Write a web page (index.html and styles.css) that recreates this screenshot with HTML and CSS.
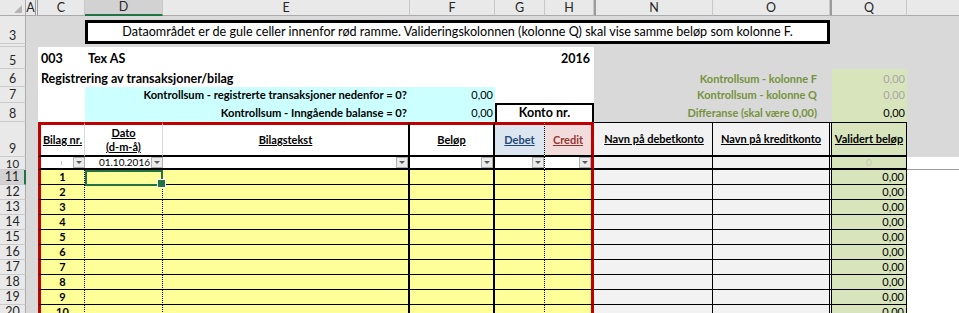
FILE: index.html
```html
<!DOCTYPE html>
<html lang="no">
<head>
<meta charset="utf-8">
<title>Registrering av transaksjoner/bilag</title>
<link rel="stylesheet" href="styles.css">
</head>
<body>
<div class="sheet">
  <div class="row hdr">
    <div class="corner"></div>
    <div class="A">A</div>
    <div>C</div>
    <div class="sel">D</div>
    <div>E</div>
    <div>F</div>
    <div>G</div>
    <div>H</div>
    <div class="gap"></div>
    <div>N</div>
    <div>O</div>
    <div class="gap"></div>
    <div>Q</div>
    <div class="last"></div>
  </div>

  <div class="row r3">
    <div class="rh">3</div>
    <div class="s2"></div>
    <div class="box">Dataområdet er de gule celler innenfor rød ramme. Valideringskolonnen (kolonne Q) skal vise samme beløp som kolonne F.</div>
    <div class="s3"></div>
  </div>

  <div class="row r4">
    <div class="rh"></div>
    <div class="s13"></div>
  </div>

  <div class="row r5">
    <div class="rh">5</div>
    <div></div>
    <div class="wt b l">003</div>
    <div class="wt b l s4">Tex AS</div>
    <div class="wt b r">2016</div>
    <div class="s6"></div>
  </div>

  <div class="row r6">
    <div class="rh">6</div>
    <div></div>
    <div class="wt title s6">Registrering av transaksjoner/bilag</div>
    <div></div>
    <div class="olive s2">Kontrollsum - kolonne F</div>
    <div></div>
    <div class="qv dim">0,00</div>
    <div></div>
  </div>

  <div class="row r7">
    <div class="rh">7</div>
    <div></div>
    <div class="wt"></div>
    <div class="cy lab s2">Kontrollsum - registrerte transaksjoner nedenfor = 0?</div>
    <div class="cy num">0,00</div>
    <div class="wt s2"></div>
    <div></div>
    <div class="olive s2">Kontrollsum - kolonne Q</div>
    <div></div>
    <div class="qv dim">0,00</div>
    <div></div>
  </div>

  <div class="row r8">
    <div class="rh">8</div>
    <div></div>
    <div class="wt"></div>
    <div class="cy lab s2">Kontrollsum - Inngående balanse = 0?</div>
    <div class="cy num">0,00</div>
    <div class="konto s2">Konto nr.</div>
    <div></div>
    <div class="olive s2">Differanse (skal være 0,00)</div>
    <div></div>
    <div class="qv">0,00</div>
    <div></div>
  </div>

  <div class="row r9">
    <div class="rh">9</div>
    <div></div>
    <div class="C"><span>Bilag nr.</span></div>
    <div class="D"><span>Dato<br>(d-m-å)</span></div>
    <div class="E"><span>Bilagstekst</span></div>
    <div class="F"><span>Beløp</span></div>
    <div class="G"><span>Debet</span></div>
    <div class="H"><span>Credit</span></div>
    <div class="g1"></div>
    <div class="N"><span>Navn på debetkonto</span></div>
    <div class="O"><span>Navn på kreditkonto</span></div>
    <div class="g2"></div>
    <div class="Q"><span>Validert beløp</span></div>
    <div class="X"></div>
  </div>

  <div class="row r10">
    <div class="rh">10</div>
    <div></div>
    <div class="C"><span class="tick"></span><span class="dd"></span></div>
    <div class="D"><span class="date">01.10.2016</span><span class="dd"></span></div>
    <div class="E"><span class="dd"></span></div>
    <div class="F"><span class="dd"></span></div>
    <div class="G"><span class="dd"></span></div>
    <div class="H"><span class="dd"></span></div>
    <div class="g1"></div>
    <div class="N"></div>
    <div class="O"></div>
    <div class="g2"></div>
    <div class="Q">0</div>
    <div class="X"></div>
  </div>

  <div class="row rd">
    <div class="rh sel">11</div><div></div>
    <div class="C">1</div><div class="D act"></div><div class="E"></div><div class="F"></div><div class="G"></div><div class="H"></div>
    <div class="g1"></div><div class="N"></div><div class="O"></div><div class="g2"></div><div class="Q">0,00</div><div class="X"></div>
  </div>
  <div class="row rd">
    <div class="rh">12</div><div></div>
    <div class="C">2</div><div class="D"></div><div class="E"></div><div class="F"></div><div class="G"></div><div class="H"></div>
    <div class="g1"></div><div class="N"></div><div class="O"></div><div class="g2"></div><div class="Q">0,00</div><div class="X"></div>
  </div>
  <div class="row rd">
    <div class="rh">13</div><div></div>
    <div class="C">3</div><div class="D"></div><div class="E"></div><div class="F"></div><div class="G"></div><div class="H"></div>
    <div class="g1"></div><div class="N"></div><div class="O"></div><div class="g2"></div><div class="Q">0,00</div><div class="X"></div>
  </div>
  <div class="row rd">
    <div class="rh">14</div><div></div>
    <div class="C">4</div><div class="D"></div><div class="E"></div><div class="F"></div><div class="G"></div><div class="H"></div>
    <div class="g1"></div><div class="N"></div><div class="O"></div><div class="g2"></div><div class="Q">0,00</div><div class="X"></div>
  </div>
  <div class="row rd">
    <div class="rh">15</div><div></div>
    <div class="C">5</div><div class="D"></div><div class="E"></div><div class="F"></div><div class="G"></div><div class="H"></div>
    <div class="g1"></div><div class="N"></div><div class="O"></div><div class="g2"></div><div class="Q">0,00</div><div class="X"></div>
  </div>
  <div class="row rd">
    <div class="rh">16</div><div></div>
    <div class="C">6</div><div class="D"></div><div class="E"></div><div class="F"></div><div class="G"></div><div class="H"></div>
    <div class="g1"></div><div class="N"></div><div class="O"></div><div class="g2"></div><div class="Q">0,00</div><div class="X"></div>
  </div>
  <div class="row rd">
    <div class="rh">17</div><div></div>
    <div class="C">7</div><div class="D"></div><div class="E"></div><div class="F"></div><div class="G"></div><div class="H"></div>
    <div class="g1"></div><div class="N"></div><div class="O"></div><div class="g2"></div><div class="Q">0,00</div><div class="X"></div>
  </div>
  <div class="row rd">
    <div class="rh">18</div><div></div>
    <div class="C">8</div><div class="D"></div><div class="E"></div><div class="F"></div><div class="G"></div><div class="H"></div>
    <div class="g1"></div><div class="N"></div><div class="O"></div><div class="g2"></div><div class="Q">0,00</div><div class="X"></div>
  </div>
  <div class="row rd">
    <div class="rh">19</div><div></div>
    <div class="C">9</div><div class="D"></div><div class="E"></div><div class="F"></div><div class="G"></div><div class="H"></div>
    <div class="g1"></div><div class="N"></div><div class="O"></div><div class="g2"></div><div class="Q">0,00</div><div class="X"></div>
  </div>
  <div class="row rd">
    <div class="rh">20</div><div></div>
    <div class="C">10</div><div class="D"></div><div class="E"></div><div class="F"></div><div class="G"></div><div class="H"></div>
    <div class="g1"></div><div class="N"></div><div class="O"></div><div class="g2"></div><div class="Q">0,00</div><div class="X"></div>
  </div>
</div>
</body>
</html>
```

FILE: styles.css
```css
* { box-sizing: border-box; margin: 0; padding: 0; }
html, body { width: 959px; height: 313px; overflow: hidden; background: #fff; }
body { font-family: Lato, "Liberation Sans", sans-serif; font-size: 11px; color: #000; }

.sheet {
  display: grid;
  grid-template-columns: 26px 12px 47px 78px 247px 85px 50px 49px 2px 117px 117px 2px 75px 1fr;
  grid-template-rows: 16px 28px 3px 22px 18px 16px 19px 35px 13px repeat(10, 15px);
  width: 959px;
  background: #d9d9d9;
}
.row { display: contents; }
.row > div {
  display: flex;
  align-items: flex-end;
  min-width: 0;
  overflow: hidden;
  white-space: nowrap;
  line-height: 14px;
}

/* spans */
.s2 { grid-column: span 2; }
.s3 { grid-column: span 3; }
.s4 { grid-column: span 4; }
.s6 { grid-column: span 6; }
.s13 { grid-column: span 13; }

/* column headers */
.hdr > div {
  background: #e9e9e9;
  border-right: 1px solid #c8c8c8;
  border-bottom: 1px solid #ababab;
  justify-content: center;
  align-items: center;
  font-size: 12.5px;
  color: #262626;
}
.hdr > .A { border-right: 3px double #9c9c9c; }
.hdr > .gap { border-left: 1px solid #9c9c9c; border-right: 1px solid #9c9c9c; }
.hdr > .sel { background: #d2d2d2; border-bottom: 2px solid #217346; }
.hdr > .last { border-right: none; }
.hdr > .corner { position: relative; border-right: 1px solid #ababab; }
.corner::after {
  content: "";
  position: absolute;
  right: 3px;
  bottom: 2px;
  width: 0;
  height: 0;
  border-left: 8px solid transparent;
  border-bottom: 8px solid #b5b5b5;
}

/* row headers */
.row > .rh {
  background: #e9e9e9;
  border-right: 1px solid #ababab;
  border-bottom: 1px solid #cacaca;
  justify-content: center;
  padding-bottom: 1px;
  font-size: 12.5px;
  line-height: 12px;
  color: #262626;
}
.r10 > .rh { padding-bottom: 0; font-size: 11.5px; line-height: 11px; }
.row > .rh.sel { background: #d2d2d2; border-right: 2px solid #217346; }

/* top info box */
.r3 > .box {
  grid-column: span 8;
  margin-top: 4px;
  border: 3px solid #000;
  background: #fff;
  justify-content: center;
  align-items: center;
  font-size: 12.6px;
}

/* rows 5-8 */
.r5 > div, .r6 > div, .r7 > div, .r8 > div { padding-bottom: 1px; }
.r5 > div { padding-bottom: 3px; }
.r8 > div { padding-bottom: 2px; }
.wt { background: #fff; }
.b { font-weight: 700; font-size: 12.5px; }
.l { padding-left: 3px; }
.r { justify-content: flex-end; padding-right: 4px; }
.title { font-weight: 700; font-size: 12.5px; padding-left: 3px; }
.cy { background: #ccffff; }
.lab { justify-content: flex-end; padding-right: 3px; font-weight: 700; font-size: 11.2px; }
.num { justify-content: flex-end; padding-right: 2px; }
.olive { justify-content: flex-end; padding-right: 13px; font-weight: 700; font-size: 11px; color: #76933c; }
.qv { background: #d8e4bc; justify-content: flex-end; padding-right: 2px; }
.dim { color: #a6a6a6; }
.r8 > .konto {
  background: #fff;
  border: 2px solid #000;
  border-bottom: none;
  justify-content: center;
  font-weight: 700;
  font-size: 12.5px;
}

/* row 9: table header */
.r9 > .C, .r9 > .D, .r9 > .E, .r9 > .F, .r9 > .G, .r9 > .H {
  background: #fff;
  border-top: 3px solid #c00000;
  border-bottom: 2px solid #000;
}
.r9 > div { justify-content: center; align-items: center; text-align: center; }
.r9 > .rh { align-items: flex-end; }
.r9 span { font-weight: 700; text-decoration: underline; font-size: 11px; line-height: 14px; }
.r9 > .C { border-left: 3px solid #c00000; border-right: 1px solid #d9d9d9; }
.r9 > .D { border-right: 1px solid #d9d9d9; }
.r9 > .E, .r9 > .F { border-right: 2px solid #000; }
.r9 > .G { border-right: 1px dotted #000; background: #dce6f1; color: #1f497d; }
.r9 > .H { border-right: 3px solid #c00000; background: #f2dcdb; color: #953735; }
.r9 > .g1 { background: #f2f2f2; border-top: 1px solid #000; border-bottom: 2px solid #000; }
.r9 > .N, .r9 > .O, .r9 > .g2 {
  background: #f2f2f2;
  border-top: 1px solid #000;
  border-bottom: 2px solid #000;
  border-right: 1px solid #000;
}
.r9 > .Q {
  background: #d8e4bc;
  border-top: 1px solid #000;
  border-bottom: 2px solid #000;
  border-right: 1px solid #000;
}

/* row 10: filter row */
.r10 > .C, .r10 > .D, .r10 > .E, .r10 > .F, .r10 > .G, .r10 > .H {
  background: #fff;
  border-bottom: 2px solid #000;
  justify-content: flex-end;
  align-items: flex-start;
}
.r10 > .C { border-left: 3px solid #c00000; }
.r10 > .E, .r10 > .F { border-right: 2px solid #000; }
.r10 > .G { border-right: 1px dotted #000; }
.r10 > .H { border-right: 3px solid #c00000; }
.r10 > .g1 { background: #f2f2f2; border-bottom: 2px solid #000; }
.r10 > .N, .r10 > .O, .r10 > .g2 { background: #f2f2f2; border-bottom: 2px solid #000; border-right: 1px solid #000; }
.r10 > .Q {
  background: #d8e4bc;
  border-bottom: 2px solid #000;
  border-right: 1px solid #000;
  justify-content: center;
  align-items: center;
  color: #c3ceae;
  font-size: 10px;
  line-height: 11px;
}
.r10 > .X { background: #fff; border-bottom: 1px solid #9c9c9c; }
.date { line-height: 11px; font-size: 10px; padding-right: 1px; }
.tick { width: 1px; height: 4px; margin: 4px 11px 0 0; background: #c4c4c4; }
.dd {
  flex: none;
  width: 12px;
  height: 11px;
  background: #ebebeb;
  border: 1px solid #b0b0b0;
  display: flex;
  justify-content: center;
  align-items: center;
}
.dd::after {
  content: "";
  width: 0;
  height: 0;
  border-left: 3px solid transparent;
  border-right: 3px solid transparent;
  border-top: 3px solid #5c5c5c;
}

/* data rows */
.rd > .C, .rd > .D, .rd > .E, .rd > .F, .rd > .G, .rd > .H {
  background: #ffff99;
  border-bottom: 1px solid #000;
}
.rd > div { align-items: center; }
.rd > .rh { align-items: flex-end; }
.rd > .C { border-left: 3px solid #c00000; border-right: 1px dotted #000; justify-content: center; font-weight: 700; }
.rd > .D { border-right: 1px dotted #000; }
.rd > .E, .rd > .F { border-right: 2px solid #000; }
.rd > .G { border-right: 1px dotted #000; }
.rd > .H { border-right: 3px solid #c00000; }
.rd > .g1 { background: #f2f2f2; border-bottom: 1px solid #000; }
.rd > .N, .rd > .O, .rd > .g2 { background: #f2f2f2; border-bottom: 1px solid #000; border-right: 1px solid #000; }
.rd > .Q {
  background: #d8e4bc;
  border-bottom: 1px solid #000;
  border-right: 1px solid #000;
  justify-content: flex-end;
  padding-right: 2px;
}
.rd > .X { background: #fff; }

/* active cell D11 */
.rd > .act { position: relative; overflow: visible; z-index: 2; }
.act::before {
  content: "";
  position: absolute;
  left: 0;
  top: 0;
  right: -1px;
  bottom: -2px;
  border: 2px solid #217346;
}
.act::after {
  content: "";
  position: absolute;
  right: -4px;
  bottom: -4px;
  width: 7px;
  height: 7px;
  background: #217346;
  border: 1px solid #fff;
}
```
